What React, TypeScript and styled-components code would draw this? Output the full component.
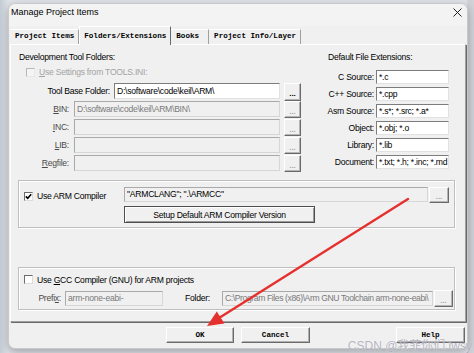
import styled, { createGlobalStyle } from "styled-components";

const GlobalStyle = createGlobalStyle`
  *, *::before, *::after { box-sizing: border-box; }
  html, body { margin: 0; padding: 0; }
  body { background: #d9dde2; }
`;

const Desktop = styled.div`
  position: relative;
  width: 474px;
  height: 353px;
  overflow: hidden;
  padding: 3px 6px 0 8px;
  background: linear-gradient(90deg, #c3cbd5 0, #dfe3e8 8px, #dfe3e8 466px, #cfd3d8 468px);
  font-family: "Liberation Sans", Arial, sans-serif;
  font-size: 8.6px;
  letter-spacing: -0.25px;
  color: #000;
`;

const Dialog = styled.div`
  width: 460px;
  display: flex;
  flex-direction: column;
  background: #f0f0f0;
  border: 1px solid #c9c9c9;
  border-radius: 7px;
  box-shadow: 0 3px 8px rgba(0, 0, 0, 0.28);
`;

const TitleBar = styled.div`
  height: 22px;
  display: flex;
  justify-content: space-between;
  align-items: flex-start;
  padding: 3px 5px 0 2px;
  background: #f3f3f3;
  border-radius: 7px 7px 0 0;
  font-size: 9px;
  letter-spacing: 0;
  line-height: 10px;
`;

const CloseIcon = styled.svg`
  margin-top: 1px;
  display: block;
`;

const TabStrip = styled.div`
  height: 18px;
  display: flex;
  align-items: flex-end;
  padding-left: 1px;
`;

const Tab = styled.div<{ $active?: boolean; $extra?: number }>`
  display: flex;
  align-items: center;
  height: ${(p) => (p.$active ? 19 : 15)}px;
  margin-bottom: ${(p) => (p.$active ? -1 : 0)}px;
  padding: 0 ${(p) => 4 + (p.$extra ?? 0)}px ${(p) => (p.$active ? 1 : 3)}px 4px;
  position: relative;
  z-index: ${(p) => (p.$active ? 1 : 0)};
  background: #f0f0f0;
  border-top: 1px solid #fff;
  border-left: 1px solid ${(p) => (p.$active ? "#fff" : "transparent")};
  border-right: 1px solid ${(p) => (p.$active ? "#6a6a6a" : "#a0a0a0")};
  font-family: "Liberation Mono", "Courier New", monospace;
  font-weight: bold;
  font-size: 7.6px;
  letter-spacing: 0;
  white-space: nowrap;
`;

const Panel = styled.div`
  margin: 0 1px;
  padding: 7px 0 11px 7px;
  border-top: 1px solid #fff;
  border-left: 1px solid #fff;
  border-right: 1px solid #a0a0a0;
  border-bottom: 1px solid #a0a0a0;
  box-shadow: 1px 1px 0 #6a6a6a;
`;

const TopSection = styled.div`
  display: flex;
`;

const LeftCol = styled.div`
  width: 288px;
  display: flex;
  flex-direction: column;
`;

const RightCol = styled.div`
  display: flex;
  flex-direction: column;
`;

const SectionTitle = styled.div<{ $indent: number }>`
  height: 10px;
  line-height: 10px;
  margin-left: ${(p) => p.$indent}px;
`;

const CheckRow = styled.div<{ $indent?: number; $h?: number; $mt?: number; $disabled?: boolean }>`
  display: flex;
  align-items: center;
  gap: 4px;
  height: ${(p) => p.$h ?? 12}px;
  margin-top: ${(p) => p.$mt ?? 0}px;
  padding-left: ${(p) => p.$indent ?? 0}px;
  color: ${(p) => (p.$disabled ? "#a3a3a3" : "#000")};
  white-space: nowrap;
`;

const Box = styled.div<{ $disabled?: boolean }>`
  width: 9px;
  height: 9px;
  flex: none;
  display: flex;
  align-items: center;
  justify-content: center;
  background: ${(p) => (p.$disabled ? "#f4f4f4" : "#fff")};
  border: 1px solid;
  border-color: ${(p) =>
    p.$disabled ? "#b8b8b8 #e8e8e8 #e8e8e8 #b8b8b8" : "#6c6c6c #dcdcdc #dcdcdc #6c6c6c"};
`;

const FolderRows = styled.div`
  margin-top: 5px;
  display: flex;
  flex-direction: column;
  gap: 1px;
`;

const FolderRow = styled.div`
  width: 283px;
  height: 17px;
  display: flex;
  align-items: flex-start;
`;

const RowLabel = styled.div<{ $w: number; $pr?: number; $dim?: boolean }>`
  width: ${(p) => p.$w}px;
  flex: none;
  padding-right: ${(p) => p.$pr ?? 4}px;
  text-align: right;
  line-height: 16px;
  color: ${(p) => (p.$dim ? "#4a4a4a" : "#000")};
  white-space: nowrap;
`;

const Field = styled.div<{ $w?: number; $h?: number; $off?: boolean; $mt?: number; $tight?: boolean }>`
  ${(p) => (p.$w ? `width: ${p.$w}px; flex: none;` : "flex: 1;")}
  height: ${(p) => p.$h ?? 16}px;
  margin-top: ${(p) => p.$mt ?? 0}px;
  padding: 0 2px;
  line-height: ${(p) => (p.$h ?? 16) - 2}px;
  letter-spacing: ${(p) => (p.$tight ? "-0.4px" : "inherit")};
  overflow: hidden;
  white-space: nowrap;
  background: ${(p) => (p.$off ? "#f0f0f0" : "#fff")};
  color: ${(p) => (p.$off ? "#7a7a7a" : "#000")};
  border: 1px solid;
  border-color: ${(p) =>
    p.$off ? "#a9a9a9 #d6d6d6 #d6d6d6 #a9a9a9" : "#7c7c7c #e2e2e2 #e2e2e2 #7c7c7c"};
`;

const DotsButton = styled.div<{ $w?: number; $h?: number; $off?: boolean; $ml?: number }>`
  width: ${(p) => p.$w ?? 17}px;
  height: ${(p) => p.$h ?? 17}px;
  flex: none;
  margin-left: ${(p) => p.$ml ?? 4}px;
  display: flex;
  align-items: center;
  justify-content: center;
  padding-top: 3px;
  background: #f0f0f0;
  border: 1px solid;
  border-color: #fff #6a6a6a #6a6a6a #fff;
  box-shadow: inset -1px -1px 0 #b4b4b4;
  font-weight: bold;
  font-size: 8px;
  letter-spacing: 0;
  color: ${(p) => (p.$off ? "#a8a8a8" : "#000")};
`;

const ExtRows = styled.div`
  margin-top: 8px;
  display: flex;
  flex-direction: column;
  gap: 3px;
`;

const ExtRow = styled.div`
  height: 14px;
  display: flex;
  align-items: center;
`;

const ExtLabel = styled.div`
  width: 70px;
  padding-right: 2px;
  text-align: right;
  white-space: nowrap;
`;

const GroupBox = styled.div<{ $mt: number; $pad: string }>`
  width: 437px;
  margin-top: ${(p) => p.$mt}px;
  padding: ${(p) => p.$pad};
  border: 1px solid #bfbfbf;
  box-shadow: inset 1px 1px 0 #fff, 1px 1px 0 #fff;
`;

const GroupRow = styled.div<{ $h: number; $mt?: number; $indent?: number; $pull?: number }>`
  display: flex;
  align-items: flex-start;
  height: ${(p) => p.$h}px;
  margin-top: ${(p) => p.$mt ?? 0}px;
  margin-left: ${(p) => -(p.$pull ?? 0)}px;
  padding-left: ${(p) => p.$indent ?? 0}px;
`;

const CheckArea = styled.div`
  width: 100px;
  flex: none;
  display: flex;
  align-items: center;
  gap: 4px;
  height: 18px;
  white-space: nowrap;
`;

const PushButton = styled.div<{ $w: number }>`
  width: ${(p) => p.$w}px;
  height: 17px;
  display: flex;
  align-items: center;
  justify-content: center;
  background: #f0f0f0;
  border: 1px solid #4e4e4e;
  box-shadow: inset 1px 1px 0 #fff, inset -1px -1px 0 #9a9a9a;
  white-space: nowrap;
`;

const Footer = styled.div`
  height: 26px;
  display: flex;
  gap: 7px;
  padding: 5px 2px 0 157px;
`;

const FooterButton = styled.div<{ $w?: number; $push?: boolean }>`
  width: ${(p) => p.$w ?? 68}px;
  height: 16px;
  margin-left: ${(p) => (p.$push ? "auto" : "0")};
  display: flex;
  align-items: center;
  justify-content: center;
  background: #f0f0f0;
  border: 1px solid;
  border-color: #fff #6a6a6a #6a6a6a #fff;
  box-shadow: inset -1px -1px 0 #b0b0b0;
  font-family: "Liberation Mono", "Courier New", monospace;
  font-weight: bold;
  font-size: 7.6px;
  letter-spacing: 0;
`;

const Overlay = styled.svg`
  position: absolute;
  left: 0;
  top: 0;
  pointer-events: none;
`;

const Watermark = styled.div`
  position: absolute;
  right: 2px;
  bottom: 0;
  font-family: "Liberation Sans", "Noto Sans CJK SC", sans-serif;
  font-size: 12px;
  letter-spacing: 0;
  line-height: 14px;
  color: rgba(150, 150, 168, 0.72);
  text-shadow: 0 0 1px rgba(255, 255, 255, 0.9);
  white-space: nowrap;
`;

const Check = () => (
  <svg width="7" height="7" viewBox="0 0 7 7">
    <path d="M0.8 3.4 L2.7 5.3 L6.2 1.2" fill="none" stroke="#000" strokeWidth="1.6" />
  </svg>
);

const folders = [
  { label: <><u>B</u>IN:</>, value: "D:\\software\\code\\keil\\ARM\\BIN\\" },
  { label: <><u>I</u>NC:</>, value: "" },
  { label: <><u>L</u>IB:</>, value: "" },
  { label: <><u>R</u>egfile:</>, value: "" },
];

const extensions = [
  ["C Source:", "*.c"],
  ["C++ Source:", "*.cpp"],
  ["Asm Source:", "*.s*; *.src; *.a*"],
  ["Object:", "*.obj; *.o"],
  ["Library:", "*.lib"],
  ["Document:", "*.txt; *.h; *.inc; *.md"],
];

export default function App() {
  return (
    <>
      <GlobalStyle />
      <Desktop>
        <Dialog>
          <TitleBar>
            <span>Manage Project Items</span>
            <CloseIcon width="9" height="9" viewBox="0 0 9 9">
              <path d="M0.5 0.5 L8.5 8.5 M8.5 0.5 L0.5 8.5" stroke="#222" strokeWidth="1" />
            </CloseIcon>
          </TitleBar>
          <TabStrip>
            <Tab>Project Items</Tab>
            <Tab $active>Folders/Extensions</Tab>
            <Tab $extra={5}>Books</Tab>
            <Tab>Project Info/Layer</Tab>
          </TabStrip>
          <Panel>
            <TopSection>
              <LeftCol>
                <SectionTitle $indent={1}>Development Tool Folders:</SectionTitle>
                <CheckRow $indent={8} $mt={4} $disabled>
                  <Box $disabled />
                  <span>
                    <u>U</u>se Settings from TOOLS.INI:
                  </span>
                </CheckRow>
                <FolderRows>
                  <FolderRow>
                    <RowLabel $w={96}>Tool Base Folder:</RowLabel>
                    <Field>{"D:\\software\\code\\keil\\ARM\\"}</Field>
                    <DotsButton $h={18}>...</DotsButton>
                  </FolderRow>
                  {folders.map((f, i) => (
                    <FolderRow key={i}>
                      <RowLabel $w={56} $pr={5} $dim>
                        {f.label}
                      </RowLabel>
                      <Field $off>{f.value}</Field>
                      <DotsButton $off>...</DotsButton>
                    </FolderRow>
                  ))}
                </FolderRows>
              </LeftCol>
              <RightCol>
                <SectionTitle $indent={22}>Default File Extensions:</SectionTitle>
                <ExtRows>
                  {extensions.map(([label, value]) => (
                    <ExtRow key={label}>
                      <ExtLabel>{label}</ExtLabel>
                      <Field $w={73} $h={14}>
                        {value}
                      </Field>
                    </ExtRow>
                  ))}
                </ExtRows>
              </RightCol>
            </TopSection>

            <GroupBox $mt={8} $pad="6px 0 4px 5px">
              <GroupRow $h={16}>
                <CheckArea>
                  <Box>
                    <Check />
                  </Box>
                  <span>Use ARM Compiler</span>
                </CheckArea>
                <Field $w={304} $h={15} $off style={{ color: "#000" }}>
                  {'"ARMCLANG"; ".\\ARMCC"'}
                </Field>
                <DotsButton $w={20} $h={16} $ml={1} $off>
                  ...
                </DotsButton>
              </GroupRow>
              <GroupRow $h={17} $mt={3} $indent={100}>
                <PushButton $w={191}>Setup Default ARM Compiler Version</PushButton>
              </GroupRow>
            </GroupBox>

            <GroupBox $mt={39} $pad="6px 0 2px 5px">
              <CheckRow $h={11}>
                <Box />
                <span>
                  Use <u>G</u>CC Compiler (GNU) for ARM projects
                </span>
              </CheckRow>
              <GroupRow $h={17} $mt={5} $pull={5}>
                <RowLabel $w={46} $dim>
                  Prefi<u>x</u>:
                </RowLabel>
                <Field $w={98} $h={15} $mt={1} $off>
                  arm-none-eabi-
                </Field>
                <RowLabel $w={59} $pr={12}>
                  Folder:
                </RowLabel>
                <Field $w={211} $h={15} $mt={1} $off $tight>
                  {"C:\\Program Files (x86)\\Arm GNU Toolchain arm-none-eabi\\"}
                </Field>
                <DotsButton $w={19} $ml={1} $off>
                  ...
                </DotsButton>
              </GroupRow>
            </GroupBox>
          </Panel>
          <Footer>
            <FooterButton>OK</FooterButton>
            <FooterButton $w={69}>Cancel</FooterButton>
            <FooterButton $w={69} $push>
              Help
            </FooterButton>
          </Footer>
        </Dialog>

        <Overlay width="474" height="353" viewBox="0 0 474 353">
          <line x1="408" y1="199" x2="219" y2="318" stroke="#e6302e" strokeWidth="2.4" strokeLinecap="round" />
          <polygon points="207,326 216.8,311.6 224.4,323.4" fill="#e6302e" />
        </Overlay>
        <Watermark>CSDN @我菲你们Jwsy</Watermark>
      </Desktop>
    </>
  );
}
